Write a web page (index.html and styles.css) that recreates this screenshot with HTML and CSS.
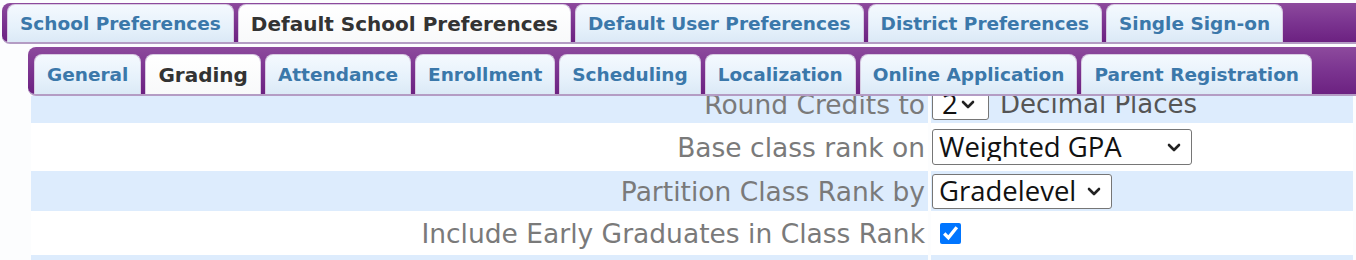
FILE: index.html
```html
<!DOCTYPE html>
<html lang="en">
<head>
  <meta charset="UTF-8">
  <meta name="viewport" content="width=device-width, initial-scale=1.0">
  <title>Default School Preferences - Grading</title>
  <link rel="stylesheet" href="styles.css">
</head>
<body>
  <!-- Top level tabs -->
  <ul class="tabs tabs-main">
    <li class="tab">School Preferences</li>
    <li class="tab active">Default School Preferences</li>
    <li class="tab">Default User Preferences</li>
    <li class="tab">District Preferences</li>
    <li class="tab">Single Sign-on</li>
  </ul>

  <!-- Sub tabs -->
  <ul class="tabs tabs-sub">
    <li class="tab">General</li>
    <li class="tab active">Grading</li>
    <li class="tab">Attendance</li>
    <li class="tab">Enrollment</li>
    <li class="tab">Scheduling</li>
    <li class="tab">Localization</li>
    <li class="tab">Online Application</li>
    <li class="tab">Parent Registration</li>
  </ul>

  <!-- Grading preferences (scrolled, first row sits under the tabs) -->
  <div class="content">
    <table class="prefs">
      <tr class="row-a">
        <td class="label">Round Credits to</td>
        <td class="value">
          <select class="sel sel-small"><option>2</option></select>
          <span class="unit">Decimal Places</span>
        </td>
      </tr>
      <tr class="row-b">
        <td class="label">Base class rank on</td>
        <td class="value">
          <select class="sel sel-wide"><option>Weighted GPA</option></select>
        </td>
      </tr>
      <tr class="row-c">
        <td class="label">Partition Class Rank by</td>
        <td class="value">
          <select class="sel sel-mid"><option>Gradelevel</option></select>
        </td>
      </tr>
      <tr class="row-d">
        <td class="label">Include Early Graduates in Class Rank</td>
        <td class="value">
          <input type="checkbox" class="check" checked>
        </td>
      </tr>
      <tr class="row-e">
        <td class="label">&nbsp;</td>
        <td class="value">&nbsp;</td>
      </tr>
    </table>
  </div>
</body>
</html>
```

FILE: styles.css
```css
body {
  margin: 0;
  background-color: #fcfdfe;
  font-family: "DejaVu Sans", Verdana, sans-serif;
  overflow: hidden;
}

/* Tab bars */
.tabs {
  list-style: none;
  display: flex;
  align-items: flex-end;
  gap: 4px;
  margin: 0;
  background: linear-gradient(to bottom, #8d4a9d 0%, #7b3490 50%, #6c2181 100%);
  border-radius: 8px 0 0 8px;
  border-bottom: 2px solid #b49cc4;
  position: relative;
  z-index: 2;
}

.tabs-main {
  margin: 3px 0 0 2px;
  padding: 1px 0 0 5px;
}

.tabs-sub {
  margin: 3px 0 0 28px;
  padding: 7px 0 0 6px;
}

.tab {
  display: flex;
  align-items: center;
  padding: 0 12px;
  height: 38px;
  box-sizing: border-box;
  border-radius: 8px 8px 0 0;
  border: 1px solid #d8cce2;
  border-bottom: none;
  background: linear-gradient(to bottom, #f4f9fe 0%, #e6f1fb 60%, #dbe9f6 100%);
  color: #3b78aa;
  font-weight: bold;
  font-size: 18.5px;
  white-space: nowrap;
}

.tabs-sub .tab {
  height: 40px;
}

.tab.active {
  background: linear-gradient(to bottom, #ffffff 0%, #f8f9fa 100%);
  color: #333;
  font-size: 20px;
}

/* Preferences table */
.content {
  overflow: hidden;
  height: 200px;
}

.prefs {
  border-collapse: separate;
  border-spacing: 3px 0;
  margin: -16px 0 0 28px;
  width: calc(100% - 28px);
}

.prefs td {
  padding: 0;
  vertical-align: middle;
}

.row-a td,
.row-c td,
.row-e td {
  background-color: #ddecfd;
}

.row-b td,
.row-d td {
  background-color: #ffffff;
}

.row-a { height: 43px; }
.row-b { height: 48px; }
.row-c { height: 40px; }
.row-d { height: 44px; }
.row-e { height: 30px; }

.row-a td {
  padding-top: 5px;
}

.label {
  width: 894px;
  text-align: right;
  padding-right: 3px !important;
  color: #7a7a7a;
  font-size: 26.5px;
  white-space: nowrap;
}

.value {
  padding-left: 1px !important;
  white-space: nowrap;
}

.sel {
  appearance: none;
  font-family: "Open Sans", "Noto Sans", sans-serif;
  font-size: 27.5px;
  line-height: 1;
  color: #111;
  background-color: #fff;
  background-image: url("data:image/svg+xml,%3Csvg xmlns='http://www.w3.org/2000/svg' width='14' height='9' viewBox='0 0 14 9'%3E%3Cpath d='M2 2l5 5 5-5' fill='none' stroke='%23222' stroke-width='2.6' stroke-linecap='round' stroke-linejoin='round'/%3E%3C/svg%3E");
  background-repeat: no-repeat;
  background-position: right 10px center;
  border: 1px solid #767676;
  border-radius: 3px;
  padding: 0 6px;
  vertical-align: middle;
}

.sel-small {
  width: 57px;
  height: 31px;
  padding-left: 9px;
  background-position: right 13px center;
}

.sel-wide {
  width: 260px;
  height: 36px;
}

.sel-mid {
  width: 180px;
  height: 35px;
}

.unit {
  color: #555;
  font-size: 26px;
  margin-left: 6px;
  vertical-align: middle;
}

.check {
  width: 21px;
  height: 21px;
  margin: 0 0 0 8px;
  accent-color: #0075ff;
  vertical-align: middle;
}
```
